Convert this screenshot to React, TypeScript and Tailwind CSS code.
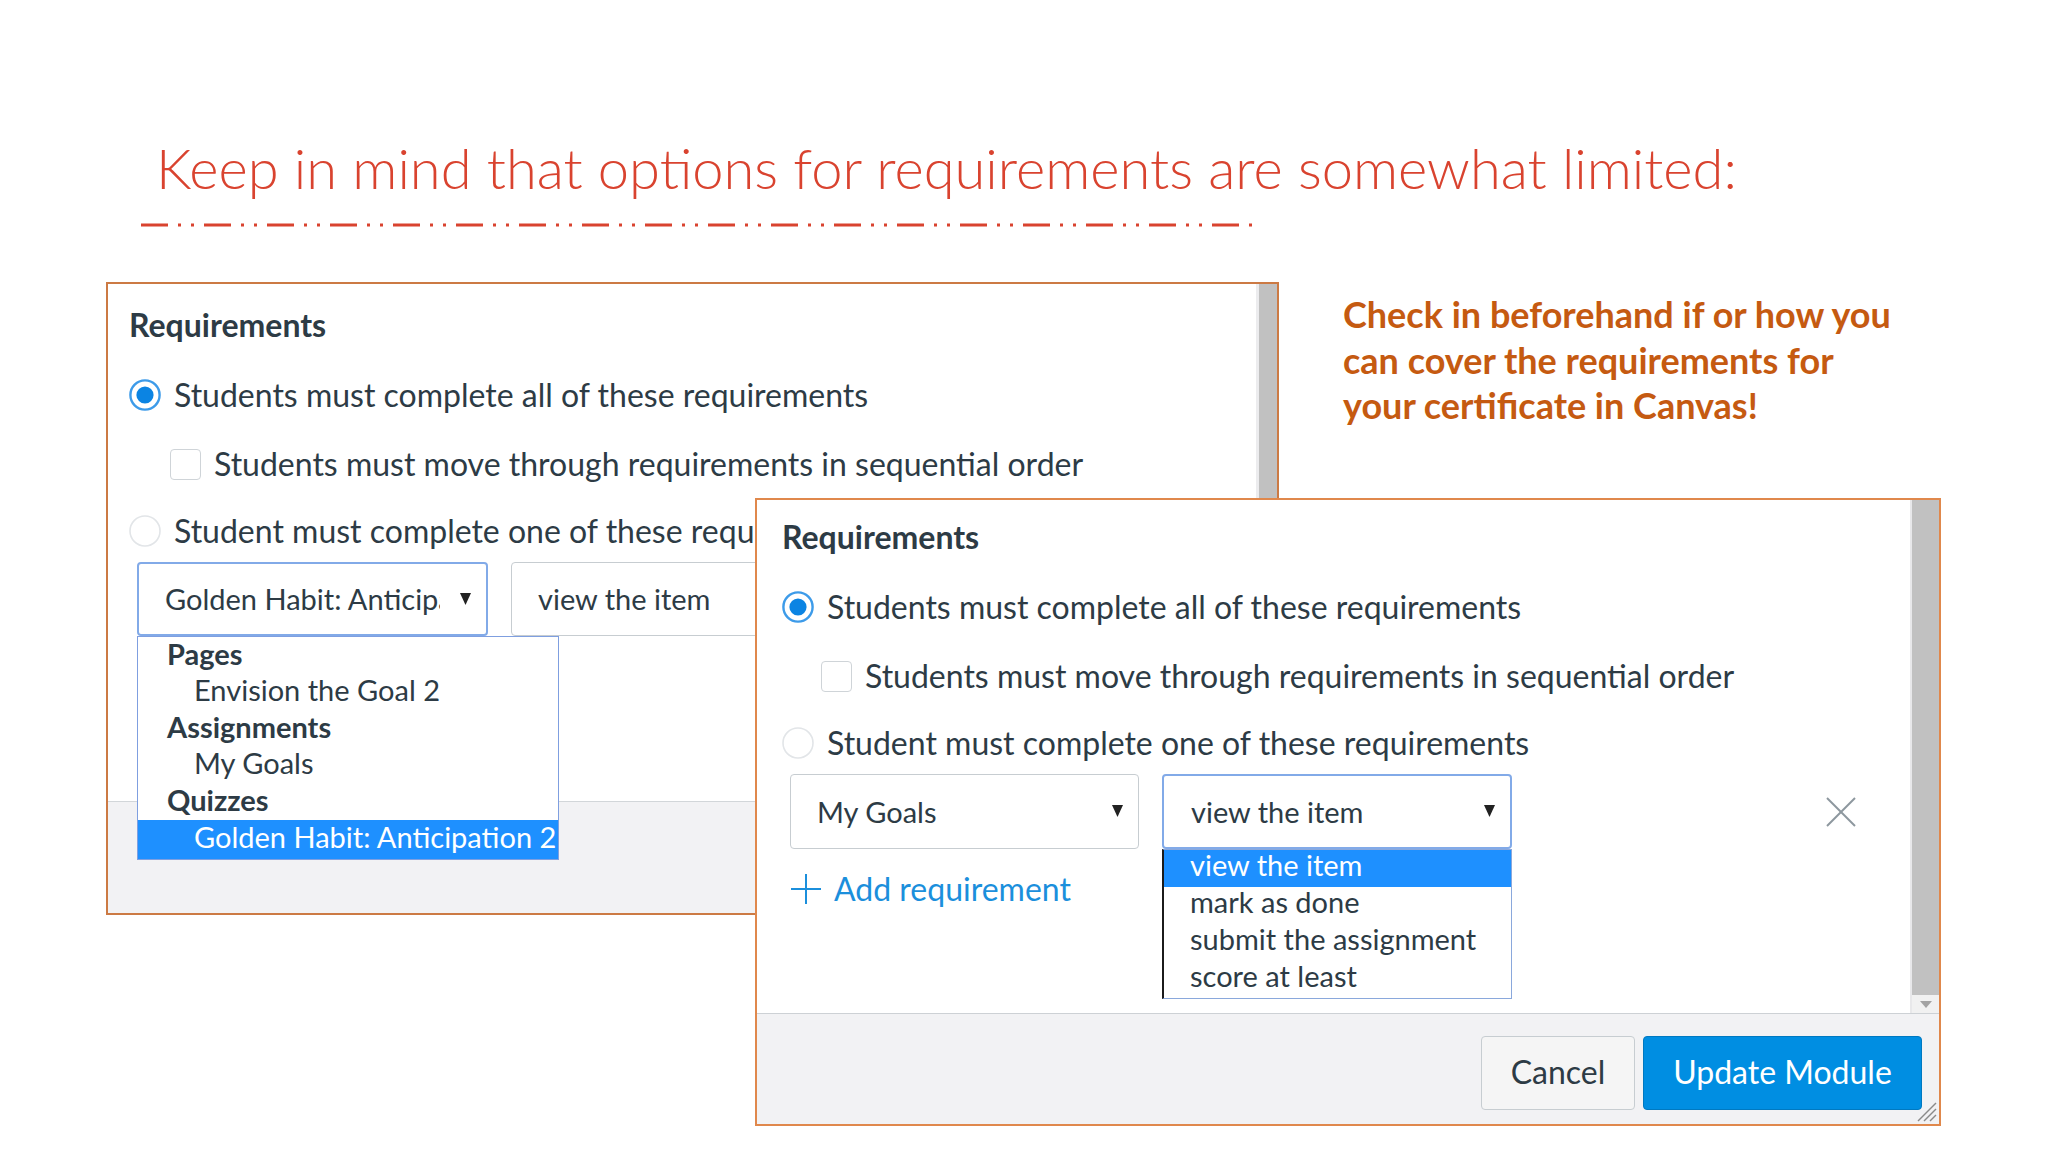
import React from "react";

function Radio({ checked }: { checked: boolean }) {
  return (
    <svg width="32" height="32" viewBox="0 0 32 32" className="shrink-0">
      {checked ? (
        <>
          <circle cx="16" cy="16" r="14.6" fill="#fff" stroke="#3d9be9" strokeWidth="2.4" />
          <circle cx="16" cy="16" r="8.6" fill="#0b84e3" />
        </>
      ) : (
        <circle cx="16" cy="16" r="15" fill="#fff" stroke="#e2e5e8" strokeWidth="1.6" />
      )}
    </svg>
  );
}

function Caret() {
  return (
    <svg width="11" height="13" viewBox="0 0 11 13" className="shrink-0">
      <polygon points="0,0 11,0 5.5,12" fill="#222" />
    </svg>
  );
}

function Checkbox() {
  return <div className="w-[31px] h-[31px] shrink-0 rounded-[4px] border-[1.5px] border-[#cfd4d8] bg-white" />;
}

function Buttons() {
  return (
    <>
      <button className="w-[154px] h-[74px] pb-[3px] rounded-[4px] border border-[#c7cdd1] bg-[#f5f5f5] text-[32px] text-[#2d3b45]">
        Cancel
      </button>
      <button className="w-[279px] h-[74px] pb-[3px] rounded-[4px] border border-[#0079c1] bg-[#008ee2] text-[32px] text-white">
        Update Module
      </button>
    </>
  );
}

function ResizeHandle() {
  return (
    <svg width="22" height="22" viewBox="0 0 22 22" className="absolute right-[2px] bottom-[2px]">
      <line x1="21" y1="3" x2="3" y2="21" stroke="#8a8a8a" strokeWidth="1.5" />
      <line x1="21" y1="9" x2="9" y2="21" stroke="#8a8a8a" strokeWidth="1.5" />
      <line x1="21" y1="15" x2="15" y2="21" stroke="#8a8a8a" strokeWidth="1.5" />
    </svg>
  );
}

function BackPanel() {
  return (
    <div className="w-[1173px] h-[633px] shrink-0 border-2 border-[#cc7a44] bg-white flex flex-col">
      <div className="flex h-[517px]">
        <div className="flex-1 relative pl-[21px] pt-[20px] text-[#2d3b45]">
          <div className="h-[42px] flex items-center text-[32px] font-bold">Requirements</div>
          <div className="mt-[28px] h-[42px] flex items-center gap-[13px] text-[32px]">
            <Radio checked />
            <span>Students must complete all of these requirements</span>
          </div>
          <div className="mt-[27px] h-[42px] pl-[41px] flex items-center gap-[13px] text-[32px]">
            <Checkbox />
            <span>Students must move through requirements in sequential order</span>
          </div>
          <div className="mt-[25px] h-[42px] flex items-center gap-[13px] text-[32px]">
            <Radio checked={false} />
            <span className="whitespace-nowrap">Student must complete one of these requirements</span>
          </div>
          <div className="mt-[10px] h-[74px] pl-[8px] flex gap-[23px] text-[29px]">
            <div className="relative w-[351px] h-full">
              <div className="w-full h-full rounded-[4px] border-2 border-[#82aae8] bg-white flex items-center justify-between pl-[26px] pr-[15px]">
                <span className="w-[275px] overflow-hidden whitespace-nowrap">Golden Habit: Anticipation 2</span>
                <Caret />
              </div>
              <div className="absolute left-0 top-full w-[422px] border border-[#7f9fe0] bg-white text-[29px] z-10">
                <div className="h-[36.5px] flex items-center pb-[4px] pl-[29px] font-bold">Pages</div>
                <div className="h-[36.5px] flex items-center pb-[4px] pl-[56px]">Envision the Goal 2</div>
                <div className="h-[36.5px] flex items-center pb-[4px] pl-[29px] font-bold">Assignments</div>
                <div className="h-[36.5px] flex items-center pb-[4px] pl-[56px]">My Goals</div>
                <div className="h-[36.5px] flex items-center pb-[4px] pl-[29px] font-bold">Quizzes</div>
                <div className="h-[39px] flex items-center pb-[4px] pl-[56px] bg-[#1e90ff] text-white">Golden Habit: Anticipation 2</div>
              </div>
            </div>
            <div className="w-[351px] h-full rounded-[4px] border border-[#c7cdd1] bg-white flex items-center justify-between pl-[26px] pr-[15px]">
              <span>view the item</span>
              <Caret />
            </div>
          </div>
        </div>
        <div className="w-[21px] flex">
          <div className="w-[3px] bg-[#ececee]" />
          <div className="w-[18px] bg-[#c1c1c1]" />
        </div>
      </div>
      <div className="relative flex-1 bg-[#f2f2f4] border-t border-[#d2d6d9] flex justify-end items-start pt-[22px] pr-[17px] gap-[8px]">
        <Buttons />
      </div>
    </div>
  );
}

function FrontPanel() {
  return (
    <div className="absolute left-[755px] top-[216px] w-[1186px] h-[628px] border-2 border-[#e0884c] bg-white flex flex-col z-20">
      <div className="flex h-[513px]">
        <div className="flex-1 relative pl-[25px] pt-[16px] text-[#2d3b45]">
          <div className="h-[42px] flex items-center text-[32px] font-bold">Requirements</div>
          <div className="mt-[28px] h-[42px] flex items-center gap-[13px] text-[32px]">
            <Radio checked />
            <span>Students must complete all of these requirements</span>
          </div>
          <div className="mt-[27px] h-[42px] pl-[39px] flex items-center gap-[13px] text-[32px]">
            <Checkbox />
            <span>Students must move through requirements in sequential order</span>
          </div>
          <div className="mt-[25px] h-[42px] flex items-center gap-[13px] text-[32px]">
            <Radio checked={false} />
            <span>Student must complete one of these requirements</span>
          </div>
          <div className="mt-[10px] h-[75px] pl-[8px] flex gap-[23px] text-[29px]">
            <div className="w-[349px] h-full rounded-[4px] border border-[#c7cdd1] bg-white flex items-center justify-between pl-[26px] pr-[15px]">
              <span>My Goals</span>
              <Caret />
            </div>
            <div className="relative w-[350px] h-full">
              <div className="w-full h-full rounded-[4px] border-2 border-[#82aae8] bg-white flex items-center justify-between pl-[27px] pr-[15px]">
                <span>view the item</span>
                <Caret />
              </div>
              <div className="absolute left-0 top-full w-[350px] border border-[#8aa8dc] border-l-2 border-l-[#1b1b1b] bg-white text-[29px] z-10">
                <div className="h-[37px] flex items-center pb-[7px] pl-[26px] bg-[#1e90ff] text-white">view the item</div>
                <div className="h-[37px] flex items-center pb-[7px] pl-[26px]">mark as done</div>
                <div className="h-[37px] flex items-center pb-[7px] pl-[26px]">submit the assignment</div>
                <div className="h-[37px] flex items-center pb-[7px] pl-[26px]">score at least</div>
              </div>
            </div>
            <div className="ml-auto mr-[53px] self-center">
              <svg width="32" height="32" viewBox="0 0 32 32">
                <line x1="2" y1="2" x2="30" y2="30" stroke="#8d979e" strokeWidth="2" />
                <line x1="30" y1="2" x2="2" y2="30" stroke="#8d979e" strokeWidth="2" />
              </svg>
            </div>
          </div>
          <div className="mt-[19px] h-[42px] pl-[8px] flex items-center gap-[12px] text-[32px] text-[#1b8fdc]">
            <svg width="32" height="32" viewBox="0 0 32 32" className="shrink-0">
              <line x1="16" y1="1" x2="16" y2="31" stroke="#1b8fdc" strokeWidth="2" />
              <line x1="1" y1="16" x2="31" y2="16" stroke="#1b8fdc" strokeWidth="2" />
            </svg>
            <span>Add requirement</span>
          </div>
        </div>
        <div className="w-[29px] flex">
          <div className="w-[2px] bg-[#e8e8ea]" />
          <div className="w-[27px] flex flex-col">
            <div className="h-[495px] bg-[#c1c1c1]" />
            <div className="flex-1 bg-[#f1f1f1] flex items-center justify-center">
              <svg width="12" height="7" viewBox="0 0 12 7">
                <polygon points="0,0 12,0 6,7" fill="#a3a3a3" />
              </svg>
            </div>
          </div>
        </div>
      </div>
      <div className="relative flex-1 bg-[#f2f2f4] border-t border-[#cdd1d5] flex justify-end items-start pt-[22px] pr-[17px] gap-[8px]">
        <Buttons />
        <ResizeHandle />
      </div>
    </div>
  );
}

export default function App() {
  return (
    <div className="w-[2048px] h-[1152px] bg-white overflow-hidden font-[Lato,sans-serif]">
      <h1 className="pl-[156px] pt-[136px] text-[56px] leading-[64px] font-light text-[#d9432f] whitespace-nowrap">
        Keep in mind that options for requirements are somewhat limited:
      </h1>
      <svg width="1116" height="4" viewBox="0 0 1116 4" className="block ml-[141px] mt-[23px]">
        <line x1="0" y1="2" x2="1116" y2="2" stroke="#d9432f" strokeWidth="3" strokeDasharray="27 10 3 10 3 10" />
      </svg>
      <div className="relative mt-[55px] pl-[106px] flex items-start">
        <BackPanel />
        <p className="ml-[64px] mt-[10px] text-[36px] leading-[45.5px] font-bold text-[#c55a11] whitespace-nowrap">
          Check in beforehand if or how you
          <br />
          can cover the requirements for
          <br />
          your certificate in Canvas!
        </p>
        <FrontPanel />
      </div>
    </div>
  );
}
